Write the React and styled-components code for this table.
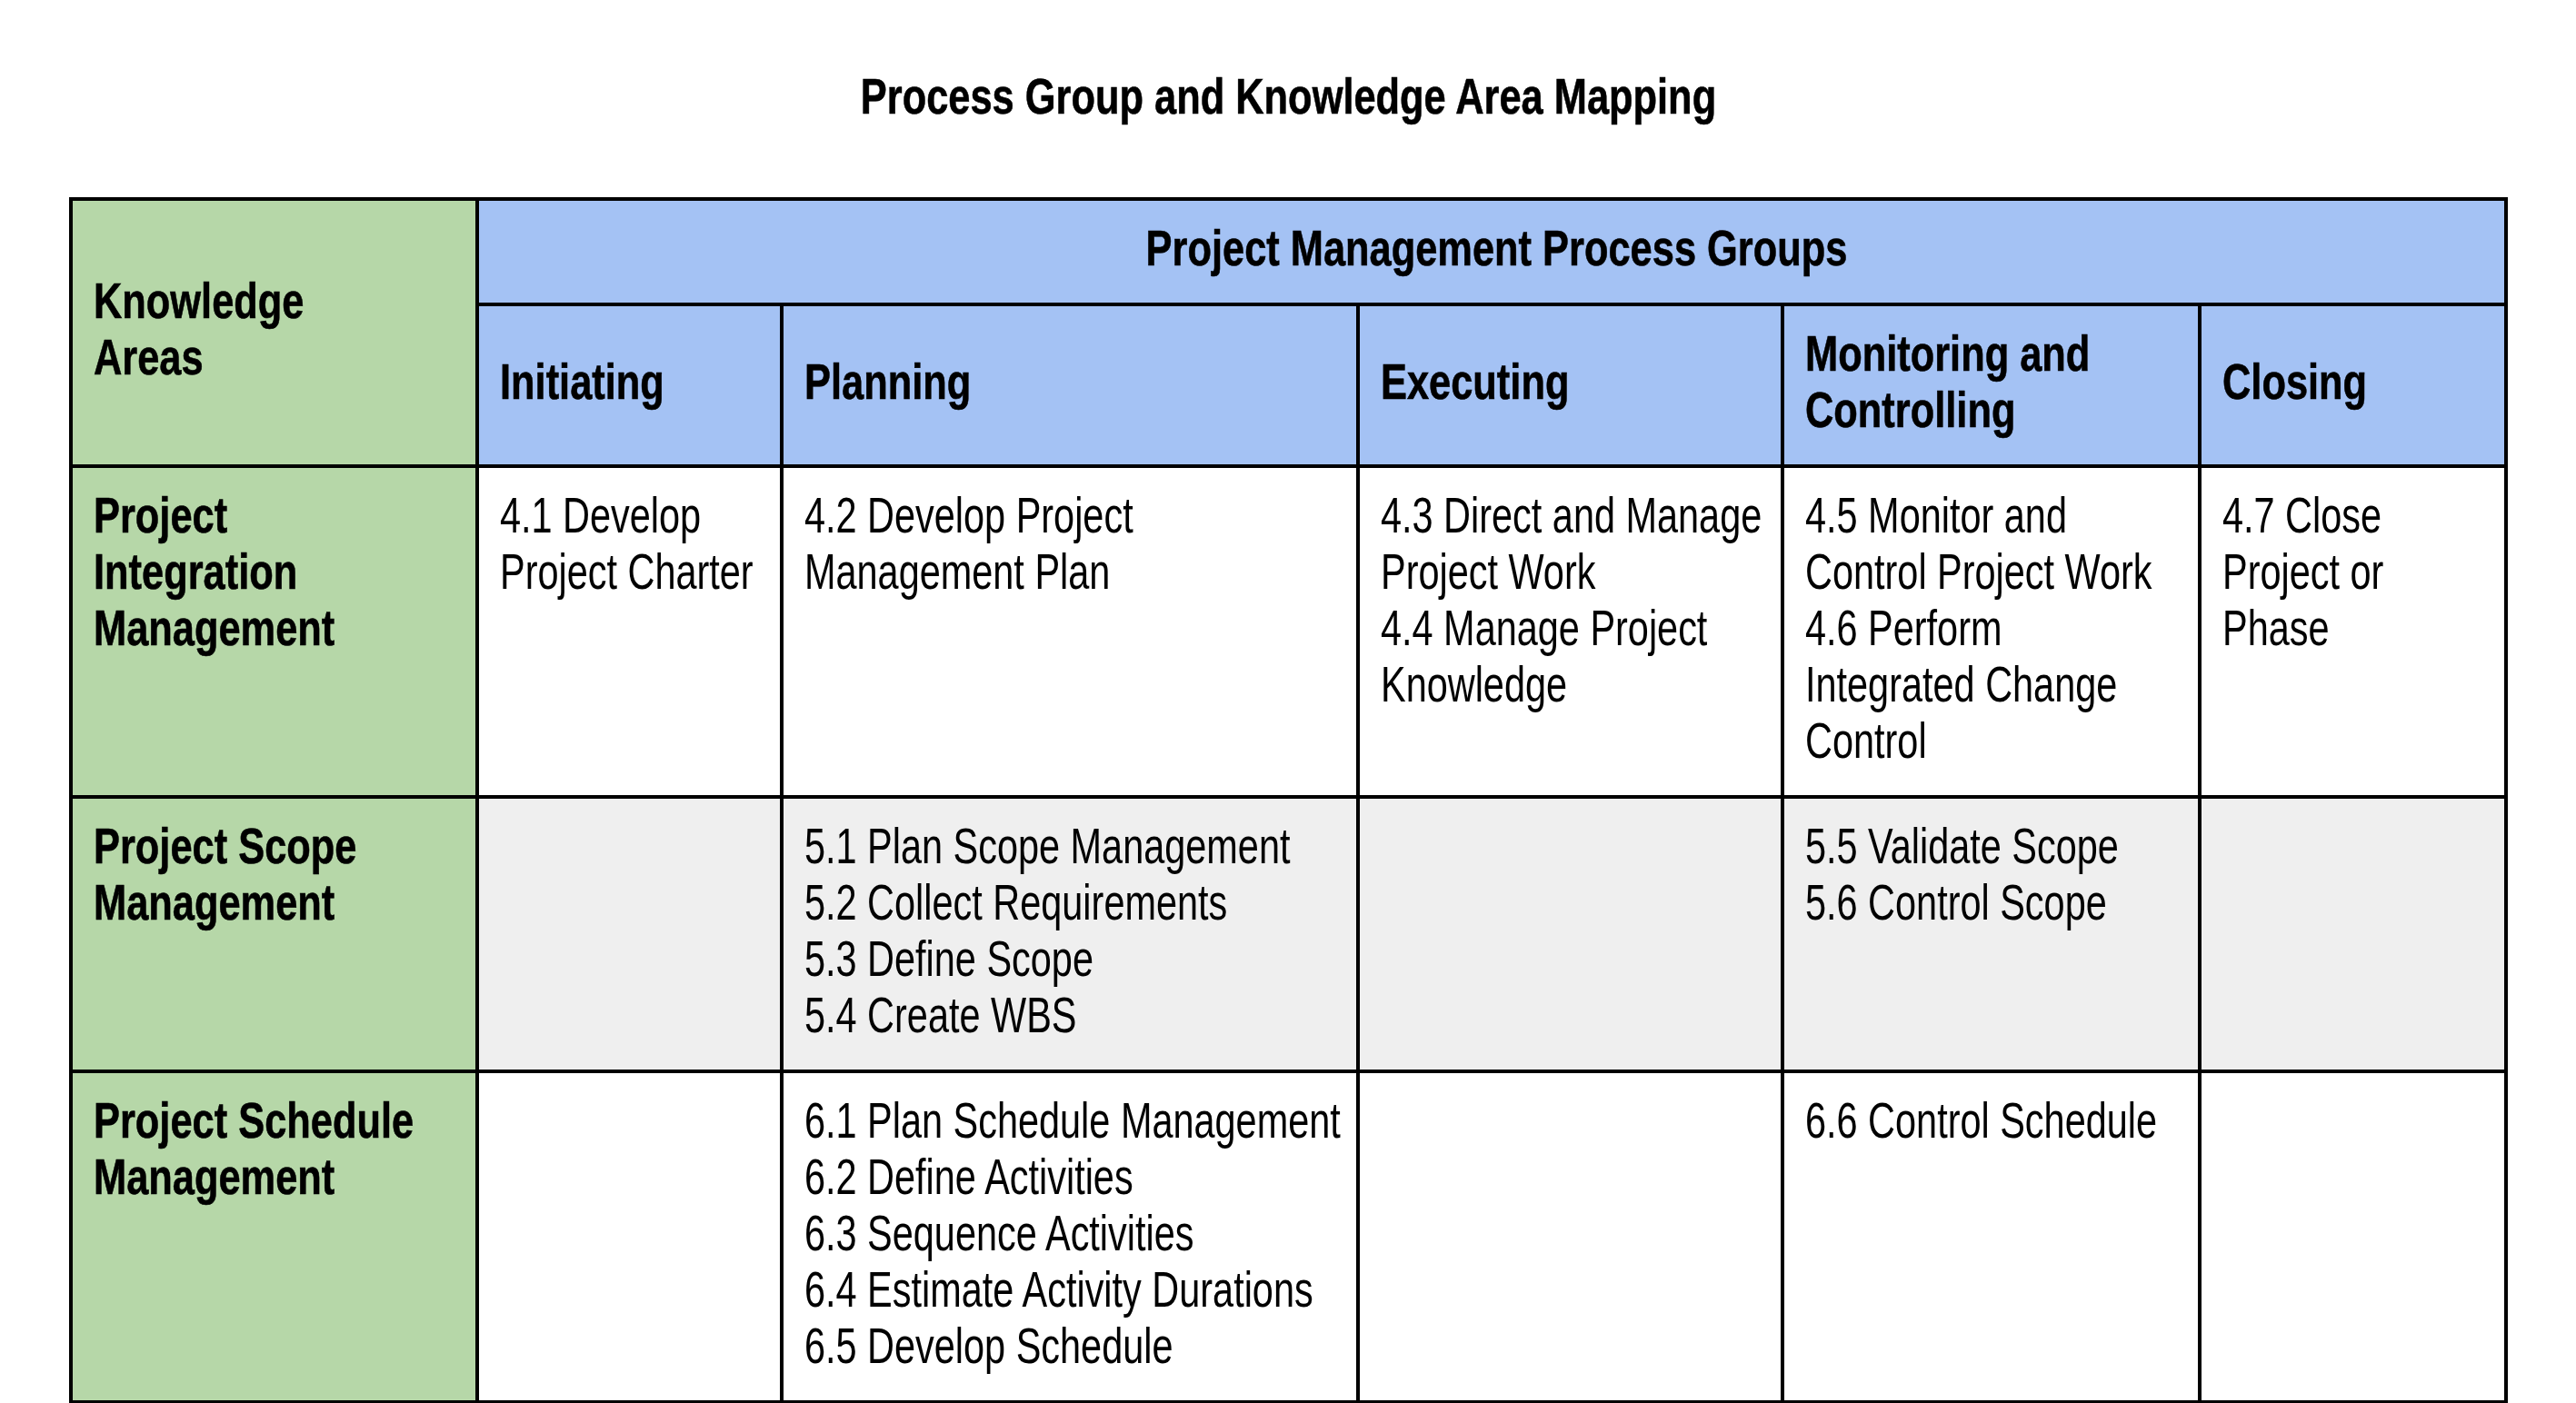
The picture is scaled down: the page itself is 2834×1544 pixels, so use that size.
import React from "react";
import styled, { createGlobalStyle } from "styled-components";

const GlobalStyle = createGlobalStyle`
  body {
    margin: 0;
    background: #ffffff;
    color: #000000;
    font-family: "Liberation Sans", Arial, sans-serif;
  }
`;

const tones = {
  green: "#b6d7a8",
  blue: "#a4c2f4",
  gray: "#efefef",
  white: "#ffffff",
};

const groups = [
  ["Initiating"],
  ["Planning"],
  ["Executing"],
  ["Monitoring and", "Controlling"],
  ["Closing"],
];

const rows = [
  {
    area: ["Project", "Integration", "Management"],
    tone: "white",
    cells: [
      [["4.1 Develop", "Project Charter"]],
      [["4.2 Develop Project", "Management Plan"]],
      [
        ["4.3 Direct and Manage", "Project Work"],
        ["4.4 Manage Project", "Knowledge"],
      ],
      [
        ["4.5 Monitor and", "Control Project Work"],
        ["4.6 Perform", "Integrated Change", "Control"],
      ],
      [["4.7 Close", "Project or", "Phase"]],
    ],
  },
  {
    area: ["Project Scope", "Management"],
    tone: "gray",
    cells: [
      [],
      [
        ["5.1 Plan Scope Management"],
        ["5.2 Collect Requirements"],
        ["5.3 Define Scope"],
        ["5.4 Create WBS"],
      ],
      [],
      [["5.5 Validate Scope"], ["5.6 Control Scope"]],
      [],
    ],
  },
  {
    area: ["Project Schedule", "Management"],
    tone: "white",
    cells: [
      [],
      [
        ["6.1 Plan Schedule Management"],
        ["6.2 Define Activities"],
        ["6.3 Sequence Activities"],
        ["6.4 Estimate Activity Durations"],
        ["6.5 Develop Schedule"],
      ],
      [],
      [["6.6 Control Schedule"]],
      [],
    ],
  },
];

const Page = styled.div`
  padding: 75px 75px 0 76px;
`;

/* the doc uses a tall condensed face; squeeze Liberation Sans to match */
const Line = styled.span`
  display: block;
  white-space: nowrap;
  transform: scaleX(var(--squeeze, 0.74));
  transform-origin: ${(p) => (p.$centered ? "center" : "left")} center;
`;

const boldText = `
  font-weight: 700;
  --squeeze: 0.775;
  -webkit-text-stroke: 0.6px #000000;
`;

const Title = styled.h1`
  margin: 0;
  font-size: 56px;
  line-height: 62px;
  text-align: center;
  ${boldText}
`;

const Grid = styled.div`
  margin-top: 80px;
  display: grid;
  grid-template-columns: 443px 331px 630px 463px 455px 333px;
  gap: 4px;
  padding: 4px;
  background: #000000;
`;

const Cell = styled.div`
  background: ${(p) => tones[p.$tone]};
  padding: 21px 12px 29px 23px;
  font-size: 56px;
  line-height: 62px;
  font-weight: 400;
  ${(p) => (p.$bold ? boldText : "")}
  display: flex;
  flex-direction: column;
  justify-content: ${(p) => (p.$middle ? "center" : "flex-start")};
  text-align: ${(p) => (p.$centered ? "center" : "left")};
  grid-column: ${(p) => (p.$colSpan ? `span ${p.$colSpan}` : "auto")};
  grid-row: ${(p) => (p.$rowSpan ? `span ${p.$rowSpan}` : "auto")};
`;

const Lines = ({ lines, centered }) => (
  <div>
    {lines.map((line, i) => (
      <Line key={i} $centered={centered}>
        {line}
      </Line>
    ))}
  </div>
);

export default function App() {
  return (
    <>
      <GlobalStyle />
      <Page>
        <Title>
          <Line $centered>Process Group and Knowledge Area Mapping</Line>
        </Title>
        <Grid>
          <Cell $tone="green" $bold $middle $rowSpan={2}>
            <Lines lines={["Knowledge", "Areas"]} />
          </Cell>
          <Cell $tone="blue" $bold $middle $centered $colSpan={5}>
            <Lines lines={["Project Management Process Groups"]} centered />
          </Cell>
          {groups.map((g, i) => (
            <Cell key={i} $tone="blue" $bold $middle>
              <Lines lines={g} />
            </Cell>
          ))}

          {rows.map((row, r) => (
            <React.Fragment key={r}>
              <Cell $tone="green" $bold>
                <Lines lines={row.area} />
              </Cell>
              {row.cells.map((items, c) => (
                <Cell key={c} $tone={row.tone}>
                  {items.map((item, k) => (
                    <Lines key={k} lines={item} />
                  ))}
                </Cell>
              ))}
            </React.Fragment>
          ))}
        </Grid>
      </Page>
    </>
  );
}
